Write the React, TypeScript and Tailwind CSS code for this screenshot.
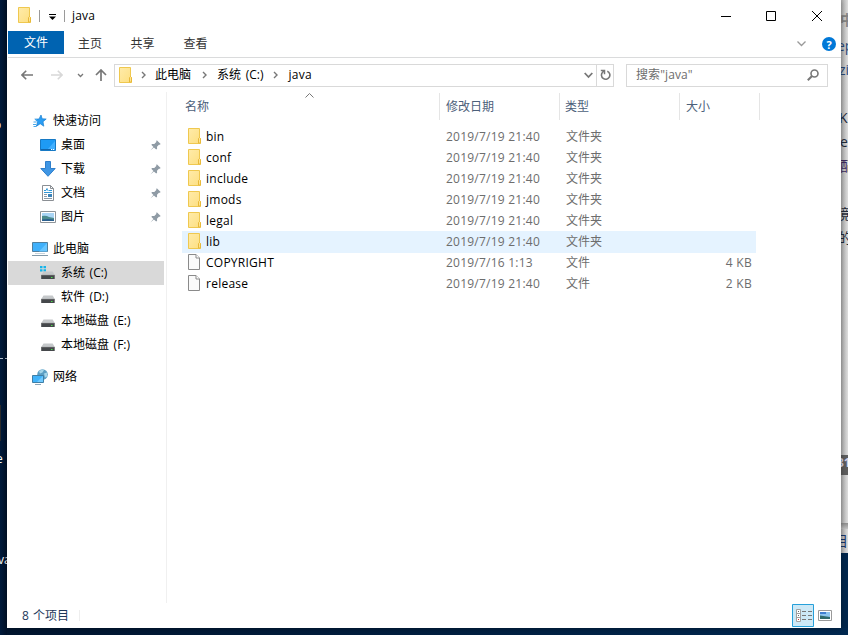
import type { ReactNode } from "react";

const files = [
  { name: "bin", date: "2019/7/19 21:40", type: "文件夹", size: "" },
  { name: "conf", date: "2019/7/19 21:40", type: "文件夹", size: "" },
  { name: "include", date: "2019/7/19 21:40", type: "文件夹", size: "" },
  { name: "jmods", date: "2019/7/19 21:40", type: "文件夹", size: "" },
  { name: "legal", date: "2019/7/19 21:40", type: "文件夹", size: "" },
  { name: "lib", date: "2019/7/19 21:40", type: "文件夹", size: "", hover: true },
  { name: "COPYRIGHT", date: "2019/7/16 1:13", type: "文件", size: "4 KB" },
  { name: "release", date: "2019/7/19 21:40", type: "文件", size: "2 KB" },
];

const FolderIcon = () => (
  <svg width="13" height="16" viewBox="0 0 13 16" className="shrink-0">
    <defs>
      <linearGradient id="folder" x1="0" y1="0" x2="1" y2="1">
        <stop offset="0" stopColor="#ffebaa" />
        <stop offset="1" stopColor="#fddf80" />
      </linearGradient>
    </defs>
    <path d="M.5.5h11v9l1 1v5H.5z" fill="url(#folder)" stroke="#efc84f" />
    <path d="M10.500 15V10.500l1-1 1 1V15z" fill="#ffe48f" stroke="#e8b93a" />
  </svg>
);

const FileIcon = () => (
  <svg width="13" height="16" viewBox="0 0 13 16" className="shrink-0">
    <path d="M.5.5h7.500L11.500 4v11.500H.5z" fill="#fafafa" stroke="#8a8a8a" />
    <path d="M8 .5V4h3.500" fill="#fff" stroke="#8a8a8a" />
  </svg>
);

const StarIcon = () => (
  <svg width="16" height="16" viewBox="0 0 16 16">
    <path d="M9 2l1.200 3.800 4 .2-3.200 2.700.8 4.500-3.600-2.500-3.900 2.700 1.300-4.600-2.800-2.700 4.200-.1z" fill="#2a9df4" stroke="#1b7fd0" strokeWidth=".7" />
    <path d="M3 6.500h2M1.500 9h3M1 11.500h3M1.500 13.500h2.500" stroke="#48a9ec" />
  </svg>
);

const DesktopIcon = () => (
  <svg width="16" height="16" viewBox="0 0 16 16">
    <path d="M.5 2.500h15v11H.5z" fill="#1e9bf5" stroke="#1779c4" />
    <path d="M7 13L15 4v9z" fill="#42b0ff" />
    <path d="M1 12.500h10" stroke="#1367ad" />
    <path d="M11 12.500h1M13 12.500h1" stroke="#fff" />
  </svg>
);

const DownloadIcon = () => (
  <svg width="16" height="16" viewBox="0 0 16 16">
    <path d="M5.500.5h5v7h4.700L8 15.300.8 7.500h4.700z" fill="#3f96e4" stroke="#2f7fcb" />
  </svg>
);

const DocumentIcon = () => (
  <svg width="16" height="16" viewBox="0 0 16 16">
    <path d="M2.500.5h8l3 3v12h-11z" fill="#fff" stroke="#8b8f94" />
    <path d="M10.500.5v3h3" fill="none" stroke="#8b8f94" />
    <path d="M4 5.500h2l1-2 .5 2M8.500 5.500H12M4 7.500h8" stroke="#2f97d8" fill="none" />
    <path d="M4 9.500h3M4 11.500h3M4 13.500h8" stroke="#8a9aa8" />
    <path d="M8 9h4v3H8z" fill="#3b82b8" />
  </svg>
);

const PictureIcon = () => (
  <svg width="16" height="16" viewBox="0 0 16 16">
    <path d="M.5 2.500h15v11H.5z" fill="#fff" stroke="#8e9499" />
    <path d="M2 4h12v8H2z" fill="#a9d5f5" />
    <path d="M2 7q4-1 7 1l5 1v3H2z" fill="#4b8b8d" />
    <path d="M2 10.500q6-1 12 0V12H2z" fill="#2a5f8e" />
  </svg>
);

const ComputerIcon = () => (
  <svg width="16" height="16" viewBox="0 0 16 16">
    <path d="M.5 1.500h15v9H.5z" fill="#3fb0fb" stroke="#4f7f9e" />
    <path d="M7 10.500L15 2v8.500z" fill="#66c5ff" />
    <path d="M3 12.500h10" stroke="#c9d3da" />
    <path d="M0 14.500h16" stroke="#8399a8" />
  </svg>
);

const DriveIcon = ({ system = false }: { system?: boolean }) => (
  <svg width="16" height="16" viewBox="0 0 16 16">
    {system && <path d="M0 1h2.500v2.300H0zM3.500 1H6v2.300H3.500zM0 4.300h2.500v2.300H0zM3.500 4.300H6v2.300H3.500z" fill="#14b4ea" />}
    <path d="M3.500 6.500h9.200l2 3.500H1.300z" fill="#c5c8ca" />
    <path d="M1.200 10h13.500v4H1.200z" fill="#45484b" />
    <path d="M1.200 10.300h13.500" stroke="#777" strokeWidth=".6" />
    <path d="M11 12.500h1.500" stroke="#4be04b" />
  </svg>
);

const NetworkIcon = () => (
  <svg width="16" height="16" viewBox="0 0 16 16">
    <circle cx="10.500" cy="5.500" r="5.300" fill="#5c9fc4" />
    <path d="M7 2.500q3-3 5-1.500L10.500 3.500 8 4.500zM12 4.500l3-1v4l-2 1z" fill="#a6d6ea" />
    <path d="M.5 6.500h11v7H.5z" fill="#41b3fa" stroke="#3f7fa6" />
    <path d="M5 13l6-6v6z" fill="#72caff" />
    <path d="M3 15.500h6" stroke="#8ba6b8" />
  </svg>
);

const PinIcon = () => (
  <svg width="11" height="11" viewBox="0 0 11 11">
    <path d="M6.800.3l3.900 3.800-1 .7-.8-.1L7 6.800l.1 2-.9.8L3.900 7.500.4 10.600l3-3.600L1.300 4.800l.9-.8 2.100.1L6.300 2V1z" fill="#8f9ba5" />
  </svg>
);

const Chevron = () => (
  <svg width="5" height="8" viewBox="0 0 5 8">
    <path d="M1 1l3 3-3 3" fill="none" stroke="#777" strokeWidth="1.400" />
  </svg>
);

const NavItem = ({ icon, label, root, pinned, active }: { icon: ReactNode; label: string; root?: boolean; pinned?: boolean; active?: boolean }) => (
  <div className={`flex h-6 w-[156px] items-center pr-[3px] ${root ? "pl-6" : "pl-8"} ${active ? "bg-[#d9d9d9]" : ""}`}>
    {icon}
    <span className="ml-[5px] flex-1 whitespace-nowrap text-black [word-spacing:1.5px]">{label}</span>
    {pinned && <PinIcon />}
  </div>
);

// pieces of the desktop and of the window behind that stick out at the sides
const Backdrop = () => (
  <>
    <div className="absolute inset-y-0 left-0 w-[7px] overflow-hidden bg-gradient-to-r from-[#001b3c] to-[#00122b] text-xs text-white">
      <span className="absolute top-[117px] -left-[6px]">o</span>
      <div className="absolute top-[358px] left-0 h-px w-[3px] bg-[#b9c3cf]" />
      <div className="absolute top-[358px] left-[5px] h-px w-[2px] bg-[#b9c3cf]" />
      <div className="absolute top-[405px] left-0 h-[36px] w-px bg-[#2b2b2b]" />
      <span className="absolute top-[451px] -left-[4px]">e</span>
      <span className="absolute top-[552px] -left-[2px]">va</span>
    </div>
    <div className="absolute top-0 right-0 h-[553px] w-[7px] overflow-hidden bg-gradient-to-r from-[#b0b0b0] to-[#dedede] text-sm text-[#1f2a3a]">
      <span className="absolute top-[10px] -left-[1px] font-bold text-[#858585]">中</span>
      <span className="absolute top-[36px] -left-[4px] text-[#2b4a78]">ep</span>
      <span className="absolute top-[60px] -left-[2px] text-[#2b4a78]">zip</span>
      <span className="absolute top-[108px] -left-[2px]">K</span>
      <span className="absolute top-[132px] -left-[1px]">e</span>
      <span className="absolute top-[156px] -left-[1px] text-[#3d2a5e]">配</span>
      <span className="absolute top-[204px] -left-[5px]">境</span>
      <span className="absolute top-[228px] -left-[3px]">的</span>
      <div className="absolute top-[455px] left-0 h-5 w-full bg-[#5e5e5e] text-xs font-bold text-[#d5d5e8]">
        <span className="absolute top-0 -left-[4px]">31</span>
      </div>
      <div className="absolute top-[523px] left-0 h-[6px] w-full bg-gradient-to-b from-[#8e8e8e] to-[#c5c5c5]" />
      <span className="absolute top-[531px] -left-[7px] text-[#18366b]">目</span>
    </div>
  </>
);

const App = () => {
  return (
    <div className="relative h-[635px] w-[848px] overflow-hidden bg-[#00264c] font-['Open_Sans','Noto_Sans_CJK_SC',sans-serif] text-xs">
      <div className="absolute inset-x-0 bottom-0 h-[7px] bg-gradient-to-r from-[#00152f] to-[#002850]" />
      <Backdrop />
      <div className="absolute top-0 left-[7px] flex h-[628px] w-[834px] flex-col bg-white pl-px text-black shadow-[0_0_6px_rgba(0,0,0,0.4)]">
        {/* title bar */}
        <div className="flex h-[31px] shrink-0 items-center">
          <div className="-mt-px ml-[10px]"><FolderIcon /></div>
          <div className="ml-2 h-3 w-px bg-[#9a9a9a]" />
          <svg className="mt-[2px] ml-[9px]" width="7" height="6" viewBox="0 0 7 6">
            <path d="M0 .5h7" stroke="#000" />
            <path d="M0 2.500h7L3.500 6z" fill="#000" />
          </svg>
          <div className="ml-2 h-3 w-px bg-[#9a9a9a]" />
          <span className="ml-[7px] tracking-[0.2px]">java</span>
          <div className="ml-auto flex items-center pr-[19px]">
            <svg width="10" height="10"><path d="M0 5.500h10" stroke="#000" /></svg>
            <svg className="ml-[35px]" width="10" height="10"><path d="M.5.5h9v9H.5z" fill="none" stroke="#000" /></svg>
            <svg className="ml-9" width="10" height="10"><path d="M0 0l10 10M10 0L0 10" stroke="#000" /></svg>
          </div>
        </div>
        {/* ribbon tabs */}
        <div className="flex h-[27px] shrink-0 border-b border-[#dadbdc] text-[#333]">
          <div className="flex h-[23px] w-14 items-center justify-center bg-[#0063b1] pt-px text-white">文件</div>
          <div className="flex h-[25px] w-[52px] items-center justify-center">主页</div>
          <div className="flex h-[25px] w-[53px] items-center justify-center">共享</div>
          <div className="flex h-[25px] w-[53px] items-center justify-center">查看</div>
          <div className="ml-auto flex h-[26px] items-center gap-4 pr-[5px]">
            <svg width="9" height="6" viewBox="0 0 9 6"><path d="M.5.5l4 4 4-4" fill="none" stroke="#999" strokeWidth="1.300" /></svg>
            <div className="flex size-[14px] items-center justify-center rounded-full bg-[#0078d7] text-[11px] leading-none font-bold text-white">?</div>
          </div>
        </div>
        {/* address bar */}
        <div className="flex h-[34px] shrink-0 items-center">
          <svg className="ml-[13px]" width="12" height="10" viewBox="0 0 12 10"><path d="M12 5H1M5.200.8L1 5l4.200 4.200" fill="none" stroke="#777" strokeWidth="1.600" /></svg>
          <svg className="ml-[18px]" width="12" height="10" viewBox="0 0 12 10"><path d="M0 5h11M6.800.8L11 5 6.800 9.200" fill="none" stroke="#d8d8d8" strokeWidth="1.600" /></svg>
          <svg className="ml-[14px]" width="7" height="5" viewBox="0 0 7 5"><path d="M1 1l2.500 2.500L6 1" fill="none" stroke="#777" strokeWidth="1.300" /></svg>
          <svg className="ml-[11px]" width="12" height="12" viewBox="0 0 12 12"><path d="M6 12V1M1 6l5-5 5 5" fill="none" stroke="#777" strokeWidth="1.700" /></svg>
          <div className="ml-[7px] flex h-[23px] w-[500px] items-center border border-[#d9d9d9] pl-1">
            <div className="-mt-px"><FolderIcon /></div>
            <span className="ml-[9px]"><Chevron /></span>
            <span className="-mt-px ml-[9px]">此电脑</span>
            <span className="ml-[11px]"><Chevron /></span>
            <span className="-mt-px ml-[10px] whitespace-nowrap [word-spacing:1.5px]">系统 (C:)</span>
            <span className="ml-[10px]"><Chevron /></span>
            <span className="-mt-px ml-[10px] tracking-[0.3px]">java</span>
            <svg className="ml-auto" width="9" height="7" viewBox="0 0 9 7"><path d="M.7 1l3.800 4 3.800-4" fill="none" stroke="#777" strokeWidth="1.800" /></svg>
            <div className="ml-[3px] flex h-full w-[17px] items-center justify-center border-l border-[#d9d9d9]">
              <svg width="11" height="12" viewBox="0 0 11 12">
                <path d="M7.300 2.200A4.200 4.200 0 1 1 2.600 3.200L4 2" fill="none" stroke="#777" strokeWidth="1.600" />
                <path d="M.8 1.500h3.700v3.700" fill="none" stroke="#777" strokeWidth="1.500" />
              </svg>
            </div>
          </div>
          <div className="ml-3 flex h-[23px] w-[202px] items-center border border-[#d9d9d9] pr-2 pl-[9px] text-[#6d6d6d]">
            <span className="tracking-[0.1px]">搜索"java"</span>
            <svg className="ml-auto" width="12" height="12" viewBox="0 0 12 12">
              <circle cx="7.500" cy="4.500" r="3.500" fill="none" stroke="#777" strokeWidth="1.600" />
              <path d="M5 7L.8 11.200" stroke="#777" strokeWidth="2" />
            </svg>
          </div>
        </div>
        <div className="flex flex-1">
          {/* navigation pane */}
          <div className="flex w-[159px] shrink-0 flex-col border-r border-[#f0f0f0] pt-[17px]">
            <NavItem root icon={<StarIcon />} label="快速访问" />
            <NavItem pinned icon={<DesktopIcon />} label="桌面" />
            <NavItem pinned icon={<DownloadIcon />} label="下载" />
            <NavItem pinned icon={<DocumentIcon />} label="文档" />
            <NavItem pinned icon={<PictureIcon />} label="图片" />
            <div className="h-2" />
            <NavItem root icon={<ComputerIcon />} label="此电脑" />
            <NavItem active icon={<DriveIcon system />} label="系统 (C:)" />
            <NavItem icon={<DriveIcon />} label="软件 (D:)" />
            <NavItem icon={<DriveIcon />} label="本地磁盘 (E:)" />
            <NavItem icon={<DriveIcon />} label="本地磁盘 (F:)" />
            <div className="h-2" />
            <NavItem root icon={<NetworkIcon />} label="网络" />
          </div>
          {/* file list */}
          <div className="flex-1 pl-[15px]">
            <div className="mt-px flex h-[27px] text-[#4c607a]">
              <div className="relative flex w-[258px] items-center border-r border-[#e5e5e5] pl-[3px]">
                名称
                <svg className="absolute top-0 left-[123px]" width="9" height="5" viewBox="0 0 9 5"><path d="M.5 4.500l4-4 4 4" fill="none" stroke="#777" /></svg>
              </div>
              <div className="flex w-[120px] items-center border-r border-[#e5e5e5] pl-[6px]">修改日期</div>
              <div className="flex w-[120px] items-center border-r border-[#e5e5e5] pl-[5px]">类型</div>
              <div className="flex w-20 items-center border-r border-[#e5e5e5] pl-[6px]">大小</div>
            </div>
            <div className="mt-[6px] text-[#6d6d6d]">
              {files.map((file) => (
                <div key={file.name} className={`-mb-px flex h-[22px] w-[574px] items-center pl-[6px] ${file.hover ? "bg-[#e5f3ff]" : ""}`}>
                  <div className="-mt-[2px]">{file.type === "文件夹" ? <FolderIcon /> : <FileIcon />}</div>
                  <span className="ml-[5px] w-[240px] tracking-[0.25px] text-black">{file.name}</span>
                  <span className="w-[120px] tracking-[0.23px]">{file.date}</span>
                  <span className="w-[100px]">{file.type}</span>
                  <span className="ml-auto pr-1 tracking-[0.3px]">{file.size}</span>
                </div>
              ))}
            </div>
          </div>
        </div>
        {/* status bar */}
        <div className="flex h-[25px] shrink-0 items-center text-[#1e395b]">
          <span className="ml-[14px] [word-spacing:1px]">8 个项目</span>
          <div className="ml-[10px] h-[11px] w-px bg-[#eee]" />
          <div className="ml-auto flex items-center gap-1 pr-[9px]">
            <svg width="22" height="23" viewBox="0 0 22 23">
              <path d="M.5.5h21v22H.5z" fill="#cce8f6" stroke="#26a0da" />
              <path d="M4.500 5.500h4v12h-4zM4.500 9.500h4M4.500 13.500h4" fill="#fff" stroke="#a0a0a0" />
              <path d="M6 7.500h1M6 11.500h1" stroke="#666" />
              <path d="M6 15.500h1" stroke="#d03030" />
              <path d="M10 7.500h4M16 7.500h4M10 11.500h4M16 11.500h4M10 15.500h4M16 15.500h4" stroke="#777" />
            </svg>
            <svg width="14" height="11" viewBox="0 0 14 11">
              <path d="M.5.5h13v10H.5z" fill="#fff" stroke="#9a9a9a" />
              <path d="M2 2h10v7H2z" fill="#8cc4ee" />
              <path d="M2 2h6v2H2z" fill="#3f7fd0" />
              <path d="M2 5.500l10 1.500v2H2z" fill="#2f6a6a" />
            </svg>
          </div>
        </div>
      </div>
    </div>
  );
};

export default App;
